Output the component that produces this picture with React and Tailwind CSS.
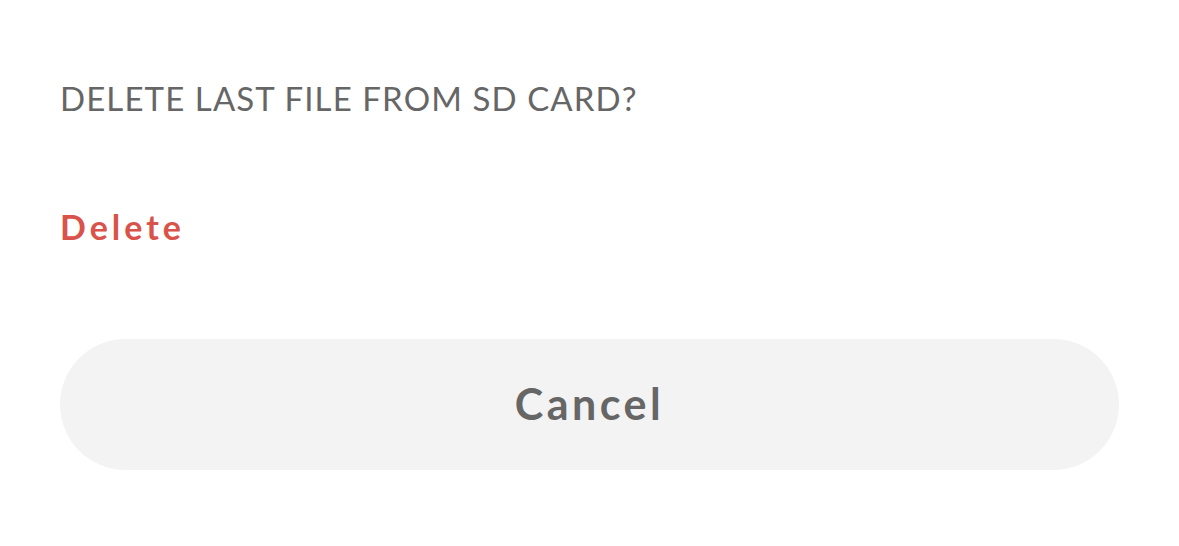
export default function App() {
  return (
    <div className="w-[1179px] h-[546px] bg-white flex flex-col px-[60px] pt-[78px] font-['Lato',sans-serif]">
      <div className="text-[33px] leading-[40px] text-[#666666] tracking-[1.1px]">DELETE LAST FILE FROM SD CARD?</div>
      <button className="mt-[89px] self-start text-[34px] leading-[40px] font-bold text-[#d9534a] tracking-[4px]">Delete</button>
      <button className="mt-[92px] h-[131px] w-full rounded-full bg-[#f3f3f3] text-[43px] font-bold text-[#666666] tracking-[3.5px]">Cancel</button>
    </div>
  );
}
